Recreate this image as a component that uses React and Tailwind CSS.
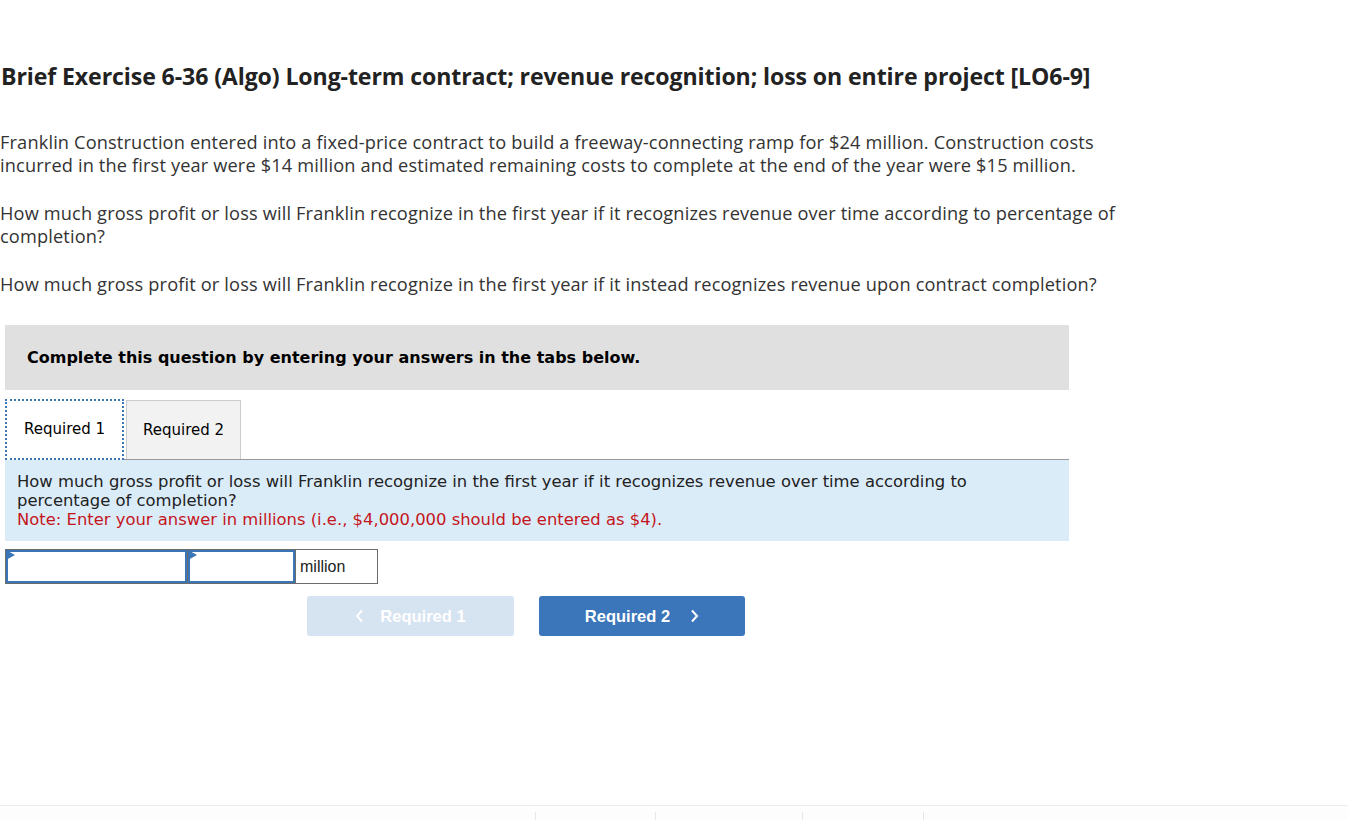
import React from "react";

const proxima = { fontFamily: "'Open Sans', Lato, sans-serif" };

export default function App() {
  return (
    <div className="w-[1348px] h-[820px] bg-white overflow-hidden flex flex-col text-[#222]">
      <div className="flex-1 pt-[61px]">
        <h1 className="font-bold text-[23.1px] leading-[31px] pl-[1px] text-[#222] tracking-[-0.1px]" style={proxima}>
          Brief Exercise 6-36 (Algo) Long-term contract; revenue recognition; loss on entire project [LO6-9]
        </h1>
        <div className="mt-[39px] text-[18.2px] leading-[23px] text-[#333] w-[1140px] tracking-[0.15px]" style={proxima}>
          <p>
            Franklin Construction entered into a fixed-price contract to build a freeway-connecting ramp for $24 million. Construction costs incurred in the first year were $14 million and estimated remaining costs to complete at the end of the year were $15 million.
          </p>
          <p className="mt-[25px]">
            How much gross profit or loss will Franklin recognize in the first year if it recognizes revenue over time according to percentage of completion?
          </p>
          <p className="mt-[25px]">
            How much gross profit or loss will Franklin recognize in the first year if it instead recognizes revenue upon contract completion?
          </p>
        </div>

        <div className="ml-[5px] w-[1064px] mt-[29px]" style={{ fontFamily: "'DejaVu Sans', Verdana, sans-serif" }}>
          <div className="h-[65px] bg-[#e0e0e0] flex items-center pl-[22px]">
            <span className="font-bold text-[16px] text-black">Complete this question by entering your answers in the tabs below.</span>
          </div>

          <div className="mt-[9px] flex items-end h-[61px] border-b border-[#999]">
            <div className="relative z-10 -mb-px h-[61px] w-[119px] bg-white outline-dotted outline-2 outline-[#3a75b8] -outline-offset-2 flex items-center justify-center text-[15px] text-black">
              Required 1
            </div>
            <div className="ml-[2px] h-[59px] w-[115px] bg-[#f2f2f2] border border-[#ccc] border-b-0 flex items-center justify-center text-[15px] text-black">
              Required 2
            </div>
          </div>

          <div className="bg-[#dbecf9] px-[12px] pt-[12px] pb-[12px] text-[16.4px] leading-[19px] text-[#222]">
            <p>How much gross profit or loss will Franklin recognize in the first year if it recognizes revenue over time according to percentage of completion?</p>
            <p className="text-[#c4161c]">Note: Enter your answer in millions (i.e., $4,000,000 should be entered as $4).</p>
          </div>

          <div className="mt-[8px] flex h-[35px]">
            <div className="relative w-[183px] h-full border border-[#6b6b6b]">
              <div className="w-full h-full border-2 border-[#3a75b8] bg-white"></div>
              <svg className="absolute left-0 top-0" width="9" height="10" viewBox="0 0 9 10"><path d="M0 0 L9 5 L0 10 Z" fill="#3a75b8" /></svg>
            </div>
            <div className="relative w-[109px] h-full border border-[#6b6b6b] -ml-px">
              <div className="w-full h-full border-2 border-[#3a75b8] bg-white"></div>
              <svg className="absolute left-0 top-0" width="9" height="10" viewBox="0 0 9 10"><path d="M0 0 L9 5 L0 10 Z" fill="#3a75b8" /></svg>
            </div>
            <div className="w-[83px] h-full border border-[#6b6b6b] -ml-px flex items-center pl-[4px] text-[16px] text-[#222]" style={{ fontFamily: "'Liberation Sans', Arial, sans-serif" }}>
              million
            </div>
          </div>

          <div className="mt-[12px] flex pl-[302px] gap-[25px]" style={{ fontFamily: "'Liberation Sans', Arial, sans-serif" }}>
            <div className="w-[207px] h-[40px] rounded-[3px] bg-[#d6e3f1] flex items-center justify-center gap-[16px] text-white font-bold text-[16.5px]">
              <svg width="9" height="14" viewBox="0 0 9 14"><path d="M7 1.5 L2 7 L7 12.5" fill="none" stroke="white" strokeWidth="2" /></svg>
              <span>Required 1</span>
            </div>
            <div className="w-[206px] h-[40px] rounded-[3px] bg-[#3a76b9] flex items-center justify-center gap-[20px] text-white font-bold text-[16.5px]">
              <span>Required 2</span>
              <svg width="9" height="14" viewBox="0 0 9 14"><path d="M2 1.5 L7 7 L2 12.5" fill="none" stroke="white" strokeWidth="2" /></svg>
            </div>
          </div>
        </div>
      </div>
      <div className="h-[15px] border-t border-[#ececec] bg-[#fdfdfd] flex items-end">
        <div className="ml-[535px] w-px h-[8px] bg-[#e6e6e6]"></div>
        <div className="ml-[119px] w-px h-[8px] bg-[#e6e6e6]"></div>
        <div className="ml-[146px] w-px h-[8px] bg-[#e6e6e6]"></div>
        <div className="ml-[120px] w-px h-[8px] bg-[#e6e6e6]"></div>
      </div>
    </div>
  );
}
